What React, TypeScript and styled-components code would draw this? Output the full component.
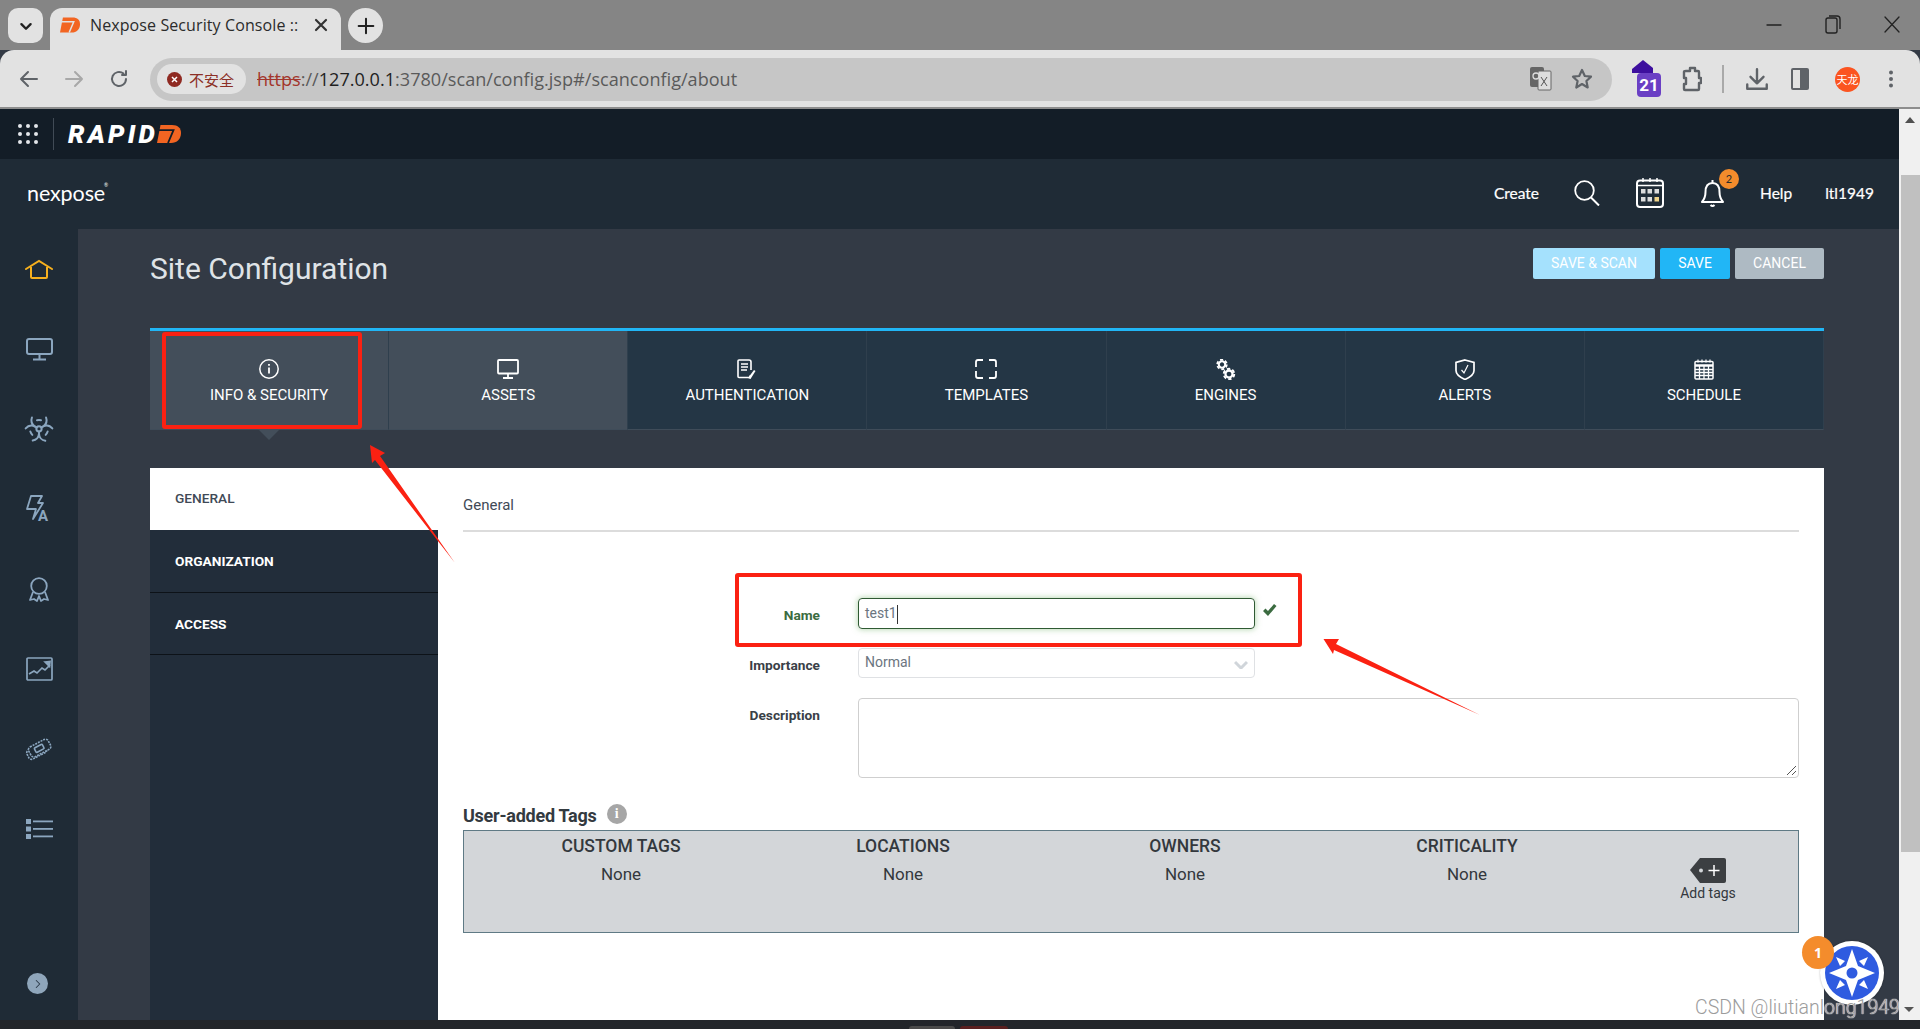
import React from "react";
import styled, { createGlobalStyle } from "styled-components";
import { Biohazard } from "lucide-react";

const Global = createGlobalStyle`
  html, body { margin: 0; padding: 0; background: #333a45; }
  * { box-sizing: border-box; }
`;

const Root = styled.div`
  position: relative;
  width: 1920px;
  height: 1029px;
  overflow: hidden;
  font-family: Roboto, "Liberation Sans", sans-serif;
  display: flex;
  flex-direction: column;
`;

/* ---------- browser chrome ---------- */
const TabStrip = styled.div`
  height: 50px;
  background: #858585;
  display: flex;
  align-items: flex-start;
  padding: 8px 14px 0 8px;
  color: #222;
`;
const TabSearch = styled.div`
  width: 35px;
  height: 35px;
  border-radius: 10px;
  background: #e2e2e2;
  display: flex;
  align-items: center;
  justify-content: center;
`;
const Tab = styled.div`
  position: relative;
  width: 291px;
  height: 42px;
  margin-left: 7px;
  background: #e2e2e2;
  border-radius: 12px 12px 0 0;
  display: flex;
  align-items: center;
  padding: 0 10px 8px 10px;
  font: 400 17.5px "Open Sans", "Noto Sans", sans-serif;
  letter-spacing: 0.1px;
  color: #2b2b2b;
  white-space: nowrap;
`;
const TabTitle = styled.span`
  margin-left: 10px;
  flex: 1;
  font-size: 16px;
`;
const NewTab = styled.div`
  width: 35px;
  height: 35px;
  margin-left: 7px;
  border-radius: 50%;
  background: #e2e2e2;
  display: flex;
  align-items: center;
  justify-content: center;
`;
const WindowControls = styled.div`
  margin-left: auto;
  display: flex;
  align-items: center;
  gap: 38px;
  height: 34px;
  padding-right: 2px;
`;
const Toolbar = styled.div`
  height: 57px;
  background: #e2e2e2;
  border-radius: 14px 14px 0 0;
  display: flex;
  align-items: center;
  padding: 1px 16px 0 17px;
  flex: none;
`;
const NavIcons = styled.div`
  display: flex;
  align-items: center;
  gap: 21px;
  width: 133px;
`;
const Omnibox = styled.div`
  width: 1462px;
  height: 43px;
  border-radius: 22px;
  background: #c6c6c6;
  display: flex;
  align-items: center;
  padding: 0 18px 0 7px;
`;
const SecurityChip = styled.div`
  width: 89px;
  height: 30px;
  border-radius: 15px;
  background: #e2e2e2;
  display: flex;
  align-items: center;
  gap: 7px;
  padding-left: 10px;
  color: #8c2f26;
  font: 400 15px "Noto Sans CJK SC", sans-serif;
  flex: none;
`;
const Url = styled.div`
  margin-left: 11px;
  font: 400 18.1px "Open Sans", "Noto Sans", sans-serif;
  color: #5a5a5a;
  white-space: nowrap;
  flex: 1;
`;
const UrlScheme = styled.span`
  color: #a3362c;
  text-decoration: line-through;
`;
const UrlHost = styled.span`
  color: #1f1f1f;
`;
const OmniIcons = styled.div`
  display: flex;
  align-items: center;
  gap: 18px;
`;
const ToolIcons = styled.div`
  display: flex;
  align-items: center;
  margin-left: 20px;
  gap: 20px;
`;
const Separator = styled.div`
  width: 2px;
  height: 28px;
  background: #a9a9a9;
`;
const Avatar = styled.div`
  width: 25px;
  height: 25px;
  margin-left: 5px;
  border-radius: 50%;
  background: #fb5420;
  color: #fff;
  font: 400 11px "Noto Sans CJK SC", sans-serif;
  display: flex;
  align-items: center;
  justify-content: center;
`;
const MenuDots = styled.svg`
  margin-left: 8px;
`;
const ChromeLine = styled.div`
  height: 2px;
  background: #8d8d8d;
  flex: none;
`;

/* ---------- page ---------- */
const PageRow = styled.div`
  flex: 1;
  min-height: 0;
  display: flex;
`;
const Page = styled.div`
  width: 1899px;
  display: flex;
  flex-direction: column;
`;
const Scrollbar = styled.div`
  width: 21px;
  background: #f0f0f0;
  display: flex;
  flex-direction: column;
  align-items: flex-end;
`;
const ScrollArrow = styled.div`
  width: 100%;
  height: 66px;
  padding-top: 8px;
  display: flex;
  justify-content: center;
  &::before {
    content: "";
    border: 5px solid transparent;
    border-top: 0;
    border-bottom: 6px solid #505050;
    height: 0;
  }
`;
const ScrollThumb = styled.div`
  width: 19px;
  height: 677px;
  background: #c0c0c0;
`;
const RapidBar = styled.div`
  height: 50px;
  background: #131d27;
  display: flex;
  align-items: center;
  padding-left: 18px;
  flex: none;
`;
const Dots = styled.div`
  display: grid;
  grid-template-columns: repeat(3, 4px);
  grid-auto-rows: 4px;
  gap: 4px 4px;
  width: 20px;
`;
const Dot = styled.span`
  border-radius: 50%;
  background: #e3e6ea;
`;
const RapidDivider = styled.div`
  width: 1px;
  height: 32px;
  background: #414b56;
  margin: 0 14px 0 15px;
`;
const RapidWord = styled.span`
  font: italic 900 26px Roboto, sans-serif;
  color: #fff;
  letter-spacing: 3.2px;
  margin-right: -1px;
`;
const NexposeBar = styled.div`
  height: 70px;
  background: #1f2b36;
  display: flex;
  align-items: center;
  padding: 0 25px 2px 27px;
  color: #fff;
  flex: none;
`;
const NexposeWord = styled.span`
  font: 400 21.5px Lato, sans-serif;
  letter-spacing: -0.1px;
  position: relative;
  &::after {
    content: "®";
    font-size: 5px;
    position: absolute;
    top: 2px;
    right: -3px;
  }
`;
const HeaderLinks = styled.div`
  margin-left: auto;
  display: flex;
  align-items: center;
  font: 400 15.5px Lato, sans-serif;
`;
const HeaderLink = styled.span<{ $ml: number }>`
  margin-left: ${(p) => p.$ml}px;
  -webkit-text-stroke: 0.2px #fff;
`;
const HeaderIcon = styled.span<{ $ml: number }>`
  position: relative;
  margin-left: ${(p) => p.$ml}px;
  display: flex;
`;
const BellBadge = styled.span`
  position: absolute;
  top: -11px;
  right: -15px;
  width: 20px;
  height: 20px;
  border-radius: 50%;
  background: #f48c2c;
  color: #2b2b2b;
  font: 400 11px Lato, sans-serif;
  display: flex;
  align-items: center;
  justify-content: center;
`;
const Body = styled.div`
  flex: 1;
  min-height: 0;
  display: flex;
`;
const Sidebar = styled.nav`
  width: 78px;
  background: #1f2b36;
  display: flex;
  flex-direction: column;
  flex: none;
  padding-bottom: 26px;
`;
const SideItem = styled.div`
  height: 80px;
  display: flex;
  align-items: center;
  justify-content: center;
  color: #8ba6bf;
  padding-right: 0;
`;
const Collapse = styled.div`
  margin-top: auto;
  margin-left: 27px;
  width: 21px;
  height: 21px;
  border-radius: 50%;
  background: #8fa6bb;
  display: flex;
  align-items: center;
  justify-content: center;
`;
const Content = styled.main`
  flex: 1;
  background: #333a45;
  padding: 0 75px 0 72px;
  display: flex;
  flex-direction: column;
  min-width: 0;
`;
const TitleRow = styled.div`
  height: 99px;
  padding-top: 19px;
  display: flex;
  justify-content: space-between;
  align-items: flex-start;
`;
const Title = styled.h1`
  margin: 3px 0 0;
  font: 400 30px Roboto, sans-serif;
  color: #dfe3e7;
`;
const Buttons = styled.div`
  display: flex;
  gap: 5px;
`;
const ActionButton = styled.button<{ $bg: string; $w: number }>`
  width: ${(p) => p.$w}px;
  height: 31px;
  border: 0;
  border-radius: 2px;
  background: ${(p) => p.$bg};
  color: #fff;
  font: 400 14px Roboto, sans-serif;
  padding: 0 0 2px;
`;
const Tabs = styled.div`
  height: 102px;
  display: grid;
  grid-template-columns: repeat(7, 1fr);
  border-top: 3px solid #21b6f6;
  flex: none;
`;
const TabCell = styled.div<{ $light?: boolean; $pointer?: boolean }>`
  position: relative;
  background: ${(p) => (p.$light ? "#434e5a" : "#243645")};
  border-right: 1px solid #2f3f4d;
  border-bottom: 1px solid #3f4c59;
  color: #fff;
  display: flex;
  flex-direction: column;
  align-items: center;
  padding-top: 28px;
  font: 400 15px Roboto, sans-serif;
  gap: 7px;
  &::after {
    content: ${(p) => (p.$pointer ? '""' : "none")};
    position: absolute;
    left: 108px;
    top: 100%;
    border: 11px solid transparent;
    border-bottom: 0;
    border-top: 11px solid #434e5a;
  }
`;
const TabIcon = styled.span`
  height: 20px;
  display: flex;
`;
const Panel = styled.div`
  margin-top: 38px;
  flex: 1;
  min-height: 0;
  background: #fff;
  display: flex;
`;
const SubNav = styled.div`
  width: 288px;
  background: #222d3a;
  flex: none;
`;
const SubItem = styled.div<{ $active?: boolean }>`
  height: ${(p) => (p.$active ? 62 : 62.5)}px;
  background: ${(p) => (p.$active ? "#fff" : "#222d3a")};
  color: ${(p) => (p.$active ? "#3f4a57" : "#fff")};
  font: ${(p) => (p.$active ? 500 : 700)} 13.7px/16px Roboto, sans-serif;
  padding: ${(p) => (p.$active ? "22px" : "23px")} 25px 0;
  border-bottom: ${(p) => (p.$active ? "0" : "1px solid #0d1218")};
`;
const Pane = styled.div`
  flex: 1;
  padding: 0 25px 0 25px;
  min-width: 0;
`;
const PaneHeader = styled.div`
  height: 64px;
  border-bottom: 2px solid #dcdcdc;
  padding-top: 28px;
  font: 400 15px Roboto, sans-serif;
  color: #3f4a57;
  margin-bottom: 66px;
`;
const FormRow = styled.div<{ $mb: number }>`
  display: flex;
  align-items: flex-start;
  margin-bottom: ${(p) => p.$mb}px;
`;
const Label = styled.div<{ $valid?: boolean }>`
  width: 357px;
  margin-right: 38px;
  padding-top: 9px;
  text-align: right;
  font: 700 13.7px/16px Roboto, sans-serif;
  color: ${(p) => (p.$valid ? "#3b6b40" : "#3a3f47")};
  flex: none;
`;
const NameField = styled.div`
  width: 397px;
  height: 31px;
  border: 1px solid #2f5a33;
  border-radius: 4px;
  box-shadow: 0 0 6px rgba(100, 170, 90, 0.55);
  font: 400 14px/29px Roboto, sans-serif;
  color: #6b7580;
  padding-left: 6px;
  display: flex;
`;
const Caret = styled.span`
  width: 1px;
  height: 19px;
  margin-top: 6px;
  background: #333;
`;
const CheckMark = styled.span`
  margin: 5px 0 0 7px;
  display: flex;
`;
const SelectField = styled.div`
  width: 397px;
  height: 30px;
  border: 1px solid #dfe1e4;
  border-radius: 4px;
  font: 400 14px/26px Roboto, sans-serif;
  color: #6b7580;
  padding: 0 4px 0 6px;
  display: flex;
  justify-content: space-between;
  align-items: flex-start;
`;
const Chevron = styled.span`
  margin-top: 11px;
  margin-right: 2px;
  display: flex;
`;
const TextArea = styled.div`
  position: relative;
  flex: 1;
  height: 80px;
  border: 1px solid #cfcfcf;
  border-radius: 4px;
`;
const Grip = styled.svg`
  position: absolute;
  right: 1px;
  bottom: 1px;
`;
const TagsHeading = styled.div`
  display: flex;
  align-items: center;
  gap: 10px;
  height: 26px;
  margin-top: 26px;
  padding-bottom: 4px;
  font: 700 18px Roboto, sans-serif;
  letter-spacing: -0.25px;
  color: #333a40;
`;
const InfoDot = styled.span`
  width: 20px;
  height: 20px;
  border-radius: 50%;
  background: #a6a6a6;
  color: #fff;
  font: 700 14px "Liberation Serif", serif;
  display: flex;
  align-items: center;
  justify-content: center;
  margin-top: -2px;
`;
const TagsBox = styled.div`
  height: 103px;
  background: #d3d6d9;
  border: 1px solid #5f7a85;
  display: flex;
  padding: 4px 0 0 16px;
`;
const TagColumn = styled.div`
  width: 282px;
  text-align: center;
  color: #33383d;
`;
const TagTitle = styled.div`
  font: 500 17.5px/20px Roboto, sans-serif;
  height: 29px;
  padding-top: 1px;
`;
const TagValue = styled.div`
  font: 400 17px/20px Roboto, sans-serif;
`;
const AddTags = styled.div`
  width: 168px;
  margin-left: 16px;
  display: flex;
  flex-direction: column;
  align-items: center;
  padding-top: 23px;
  font: 400 14px Roboto, sans-serif;
  color: #33383d;
  gap: 2px;
`;
const BottomStrip = styled.div`
  height: 9px;
  background: #22252a;
  display: flex;
  padding: 6px 0 0 909px;
  gap: 5px;
  flex: none;
`;
const TaskChip = styled.span<{ $bg: string; $w: number }>`
  width: ${(p) => p.$w}px;
  height: 3px;
  border-radius: 3px 3px 0 0;
  background: ${(p) => p.$bg};
`;

/* ---------- overlays ---------- */
const InfoHighlight = styled.div`
  position: absolute;
  left: 162px;
  top: 332px;
  width: 200px;
  height: 97px;
  border: 4px solid #fb2112;
  border-radius: 3px;
`;
const NameHighlight = styled.div`
  position: absolute;
  left: 735px;
  top: 573px;
  width: 567px;
  height: 74px;
  border: 4px solid #fb2112;
  border-radius: 3px;
`;
const ArrowLayer = styled.svg`
  position: absolute;
  left: 0;
  top: 0;
  pointer-events: none;
`;
const Helper = styled.div`
  position: absolute;
  left: 1820px;
  top: 941px;
  width: 64px;
  height: 64px;
  border-radius: 50%;
  background: #fff;
  display: flex;
  align-items: center;
  justify-content: center;
  box-shadow: 0 0 2px rgba(0, 0, 0, 0.3);
`;
const HelperBadge = styled.div`
  position: absolute;
  left: 1802px;
  top: 936px;
  width: 32px;
  height: 33px;
  border-radius: 50%;
  background: #f48c2c;
  color: #fff;
  font: 700 14px "Open Sans", sans-serif;
  display: flex;
  align-items: center;
  justify-content: center;
`;
const Watermark = styled.div`
  position: absolute;
  left: 1695px;
  top: 997px;
  font: 300 19.5px/22px Roboto, "Liberation Sans", sans-serif;
  color: #9c9c9c;
  text-shadow: 0 0 1px #fff, 0 0 1px #fff;
  white-space: nowrap;
`;
const WatermarkCaret = styled.div`
  position: absolute;
  left: 1904px;
  top: 1007px;
  border: 5px solid transparent;
  border-bottom: 0;
  border-top: 5px solid #555;
`;

/* ---------- icons ---------- */
type P = { s?: string };
const RapidMark = ({ w, h, bg }: { w: number; h: number; bg: string }) => (
  <svg width={w} height={h} viewBox="0 0 24 18">
    <path fill="#f26522" d="M3.500 0H15c6 0 9 3 9 8 0 6-4 10-10 10H0z" />
    <path fill="none" stroke={bg} strokeWidth="1.800" d="M2 5.200h14.500L11 18" />
  </svg>
);
const Line = ({ d, c = "#5f6368", w = 2, size = 24 }: { d: string; c?: string; w?: number; size?: number }) => (
  <svg width={size} height={size} viewBox="0 0 24 24" fill="none" stroke={c} strokeWidth={w} strokeLinecap="round" strokeLinejoin="round">
    <path d={d} />
  </svg>
);

const HomeIcon = () => (
  <svg width="28" height="21" viewBox="0 0 28 21" fill="none" stroke="#f6b01e" strokeWidth="2">
    <path d="M1 10 14 2l13 8" strokeLinecap="round" />
    <path d="M6 8v10q0 1 1 1h14q1 0 1-1V8" />
  </svg>
);
const MonitorIcon = ({ s = "#8ba6bf" }: P) => (
  <svg width="27" height="23" viewBox="0 0 27 23" fill="none" stroke={s} strokeWidth="2">
    <rect x="1" y="1" width="25" height="15" rx="2" />
    <path d="M13.5 16v5M7 21.5h13" />
  </svg>
);
const BoltIcon = () => (
  <svg width="30" height="34" viewBox="0 0 30 34" fill="none" stroke="#8ba6bf" strokeWidth="1.8">
    <path d="M7 4h11l-4 7h5L9 27l3-10H3z" strokeLinejoin="round" />
    <text x="14" y="29" fill="#8ba6bf" stroke="none" fontFamily="Roboto" fontWeight="700" fontSize="15">A</text>
  </svg>
);
const AwardIcon = () => (
  <svg width="20" height="25" viewBox="0 0 20 25" fill="none" stroke="#8ba6bf" strokeWidth="1.8">
    <circle cx="10" cy="9" r="7.800" />
    <path d="M4 15 1 23l4-1 3 2 2-5 2 5 3-2 4 1-3-8" strokeLinejoin="round" />
  </svg>
);
const ChartIcon = () => (
  <svg width="27" height="24" viewBox="0 0 27 24" fill="none" stroke="#8ba6bf" strokeWidth="1.7">
    <rect x="1" y="1" width="25" height="22" rx="1" />
    <path d="m3 17 5-3 3 2 5-5 3 2 5-5" />
    <path d="m19 5 5-.500-.500 5z" fill="#8ba6bf" />
  </svg>
);
const TicketIcon = () => (
  <svg width="28" height="24" viewBox="0 0 28 24" fill="none" stroke="#8ba6bf" strokeWidth="1.6">
    <g transform="rotate(-28 14 12)">
      <rect x="1" y="8" width="20" height="10" rx="3" strokeDasharray="2 1" />
      <rect x="4" y="6" width="22" height="11" rx="3" fill="#1f2b36" strokeDasharray="2 1" />
      <rect x="10" y="9" width="9" height="5" rx="1" />
    </g>
  </svg>
);
const ListIcon = () => (
  <svg width="27" height="20" viewBox="0 0 27 20" fill="#8ba6bf">
    <rect x="0" y="0" width="5" height="5" />
    <rect x="0" y="7.500" width="5" height="5" />
    <rect x="0" y="15" width="5" height="5" />
    <rect x="7" y="1.500" width="20" height="1.800" />
    <rect x="7" y="9" width="20" height="1.800" />
    <rect x="7" y="16.500" width="20" height="1.800" />
  </svg>
);
const TabInfo = () => (
  <svg width="22" height="20" viewBox="0 0 22 20" fill="none" stroke="#fff" strokeWidth="1.500">
    <circle cx="11" cy="10" r="9.200" />
    <path d="M11 8.500v6" strokeWidth="1.800" />
    <path d="M11 5v1.800" strokeWidth="1.800" />
  </svg>
);
const TabMonitor = () => (
  <svg width="22" height="20" viewBox="0 0 22 20" fill="none" stroke="#fff" strokeWidth="1.800">
    <rect x="1" y="1" width="20" height="13.500" rx="1" />
    <path d="M11 14.500v4M6 19h10" />
  </svg>
);
const TabDoc = () => (
  <svg width="20" height="20" viewBox="0 0 20 20" fill="none" stroke="#fff" strokeWidth="1.600">
    <path d="M13 16.500v2H2q-1 0-1-1V2q0-1 1-1h10q2 0 2 2v8" />
    <path d="M4 5h7M4 8h7M4 11h6" />
    <path d="m11 19 6-8 1.500 1-5 8z" fill="#fff" stroke="none" />
  </svg>
);
const TabCorners = () => (
  <svg width="22" height="20" viewBox="0 0 22 20" fill="none" stroke="#fff" strokeWidth="1.800">
    <path d="M8 1H3Q1 1 1 3v5M14 1h5q2 0 2 2v5M8 19H3q-2 0-2-2v-5M14 19h5q2 0 2-2v-5" />
  </svg>
);
const Gear = ({ x, y, r }: { x: number; y: number; r: number }) => (
  <g transform={`translate(${x} ${y})`} fill="none" stroke="#fff">
    <circle r={r} strokeWidth={r * 0.65} />
    <circle r={r * 1.5} strokeWidth={r * 0.55} strokeDasharray={`${r * 0.95} ${r * 0.62}`} />
  </g>
);
const TabGears = () => (
  <svg width="20" height="21" viewBox="0 0 20 21">
    <Gear x={6} y={5.500} r={3.200} />
    <Gear x={13} y={15} r={3.500} />
  </svg>
);
const TabShield = () => (
  <svg width="22" height="21" viewBox="0 0 22 21" fill="none" stroke="#fff" strokeWidth="1.700">
    <path d="M11 1 20 3.500v8q0 5-9 9-9-4-9-9v-8z" />
    <path d="m7.500 11 2.500 3 4-8" strokeWidth="1.200" />
  </svg>
);
const TabCalendar = () => (
  <svg width="20" height="21" viewBox="0 0 20 21" fill="none" stroke="#fff">
    <rect x="1" y="2.500" width="18" height="17.500" rx="1" strokeWidth="1.500" />
    <path d="M1 6.500h18" strokeWidth="2.500" />
    <path d="M4 0.500v3M8 0.500v3M12 0.500v3M16 0.500v3" strokeWidth="1.200" />
    <path d="M1 10.500h18M1 13.500h18M1 16.500h18M5.500 7v13M10 7v13M14.500 7v13" strokeWidth="1.300" />
  </svg>
);
const SearchIcon = () => (
  <svg width="26" height="26" viewBox="0 0 26 26" fill="none" stroke="#fff" strokeWidth="1.800">
    <circle cx="10.500" cy="10.500" r="9.300" />
    <path d="m17 17.500 8 8" strokeWidth="2" />
  </svg>
);
const CalendarIcon = () => (
  <svg width="28" height="30" viewBox="0 0 28 30" fill="none" stroke="#fff">
    <rect x="1" y="2.500" width="26" height="26.500" rx="3" strokeWidth="2" />
    <path d="M1 7.500h26M7 0v4M14 0v4M21 0v4" strokeWidth="1.500" />
    <g fill="#dcdcdc" stroke="none">
      <rect x="5" y="11" width="4.500" height="4.500" /><rect x="11.500" y="11" width="4.500" height="4.500" /><rect x="18.500" y="11" width="4.500" height="4.500" />
      <rect x="5" y="19" width="4.500" height="4.500" /><rect x="11.500" y="19" width="4.500" height="4.500" /><rect x="18.500" y="19" width="4.500" height="4.500" fill="#f0d48a" />
    </g>
  </svg>
);
const BellIcon = () => (
  <svg width="23" height="27" viewBox="0 0 23 27" fill="none" stroke="#fff" strokeWidth="2">
    <path d="M11.500 3C6 3 4.500 8 4.500 12c0 4-1 7-3.500 10h21c-2.500-3-3.500-6-3.500-10 0-4-1.500-9-7-9zM11.500 0v3" strokeLinejoin="round" />
    <path d="M9.500 25q2 2 4 0" />
  </svg>
);

const Compass = () => (
  <svg width="54" height="54" viewBox="0 0 54 54">
    <circle cx="27" cy="27" r="27" fill="#2f5be0" />
    <path fill="#fff" d="M27 3 33 20 50 27 33 34 27 51 21 34 4 27 21 20z" />
    <path fill="#fff" d="m11 11 9 4-5 5zM43 11l-4 9-5-5zM11 43l4-9 5 5zM43 43l-9-4 5-5z" />
    <circle cx="27" cy="27" r="5.500" fill="#2f5be0" />
  </svg>
);

const navItems = [
  <HomeIcon />,
  <MonitorIcon />,
  <Biohazard size={32} strokeWidth={1.5} />,
  <BoltIcon />,
  <AwardIcon />,
  <ChartIcon />,
  <TicketIcon />,
  <ListIcon />,
];
const tabs = [
  { label: "INFO & SECURITY", icon: <TabInfo />, light: true, pointer: true },
  { label: "ASSETS", icon: <TabMonitor />, light: true },
  { label: "AUTHENTICATION", icon: <TabDoc /> },
  { label: "TEMPLATES", icon: <TabCorners /> },
  { label: "ENGINES", icon: <TabGears /> },
  { label: "ALERTS", icon: <TabShield /> },
  { label: "SCHEDULE", icon: <TabCalendar /> },
];
const tagCols = ["CUSTOM TAGS", "LOCATIONS", "OWNERS", "CRITICALITY"];

export default function App() {
  return (
    <Root>
      <Global />
      <TabStrip>
        <TabSearch><Line d="m7 10 5 5 5-5" c="#222" w={2.600} size={22} /></TabSearch>
        <Tab>
          <RapidMark w={20} h={16} bg="#e2e2e2" />
          <TabTitle>Nexpose Security Console ::</TabTitle>
          <Line d="M6 6l12 12M18 6 6 18" c="#333" w={2.600} size={20} />
        </Tab>
        <NewTab><Line d="M12 4v16M4 12h16" c="#222" w={2.200} size={22} /></NewTab>
        <WindowControls>
          <Line d="M5 12h14" c="#222" w={1.300} />
          <svg width="18" height="22" viewBox="0 0 18 22" fill="none" stroke="#222" strokeWidth="1.400"><rect x="2" y="4" width="11" height="15" rx="2" /><path d="M5 2h8q3 0 3 3v10" /></svg>
          <Line d="M5 4l14 15M19 4 5 19" c="#222" w={1.300} />
        </WindowControls>
      </TabStrip>
      <Toolbar>
        <NavIcons>
          <Line d="M20 12H4m7-7-7 7 7 7" c="#5f6368" />
          <Line d="M4 12h16m-7-7 7 7-7 7" c="#a8a8a8" />
          <Line d="M19 12a7 7 0 1 1-2.500-5.400M19 4v4h-4" c="#5f6368" />
        </NavIcons>
        <Omnibox>
          <SecurityChip>
            <svg width="15" height="15" viewBox="0 0 15 15"><circle cx="7.500" cy="7.500" r="7.500" fill="#8f2a22" /><path d="m5 5 5 5m0-5-5 5" stroke="#fff" strokeWidth="1.500" /></svg>
            不安全
          </SecurityChip>
          <Url><UrlScheme>https</UrlScheme>://<UrlHost>127.0.0.1</UrlHost>:3780/scan/config.jsp#/scanconfig/about</Url>
          <OmniIcons>
            <svg width="22" height="24" viewBox="0 0 22 24"><rect x="0" y="0" width="14" height="20" rx="2" fill="#666" /><rect x="8" y="4" width="13" height="19" rx="1" fill="#ddd" stroke="#666" /><path d="m11 10 6 9M17 10l-6 9" stroke="#555" /><circle cx="6" cy="9" r="3" fill="none" stroke="#ddd" strokeWidth="1.300" /></svg>
            <Line d="m12 3 2.800 6 6.200.7-4.600 4.300 1.300 6.500L12 17l-5.700 3.500L7.600 14 3 9.700 9.200 9z" c="#5f6368" w={2.200} size={24} />
          </OmniIcons>
        </Omnibox>
        <ToolIcons>
          <svg width="30" height="38" viewBox="0 0 30 38">
            <path d="M11 0 21 8v5H0V9z" fill="#3d0f9e" />
            <rect x="5" y="13" width="24" height="24" rx="4" fill="#6a3fc4" />
            <text x="17" y="31" fill="#fff" fontFamily="Roboto" fontWeight="700" fontSize="17" textAnchor="middle">21</text>
          </svg>
          <svg width="20" height="28" viewBox="0 0 20 28" fill="none" stroke="#5f6368" strokeWidth="2.400"><path d="M4 6h4V3h5v3h3q1 0 1 1v6h2v5h-2v6q0 1-1 1H3q-1 0-1-1v-5h2v-6H2V7q0-1 2-1z" strokeLinejoin="round" /></svg>
          <Separator />
          <Line d="M12 3v13m-6-6 6 6 6-6M3 17v4h18v-4" c="#5f6368" w={2.200} size={26} />
          <svg width="20" height="26" viewBox="0 0 20 26"><rect x="1" y="2" width="18" height="22" rx="2" fill="#5f6368" /><rect x="3" y="4" width="7" height="18" fill="#e2e2e2" /></svg>
          <Avatar>天龙</Avatar>
          <MenuDots width="6" height="18" viewBox="0 0 6 18" fill="#5f6368"><circle cx="3" cy="2.500" r="2" /><circle cx="3" cy="9" r="2" /><circle cx="3" cy="15.500" r="2" /></MenuDots>
        </ToolIcons>
      </Toolbar>
      <ChromeLine />
      <PageRow>
        <Page>
          <RapidBar>
            <Dots>{Array.from({ length: 9 }).map((_, i) => <Dot key={i} />)}</Dots>
            <RapidDivider />
            <RapidWord>RAPID</RapidWord>
            <RapidMark w={24} h={18} bg="#131d27" />
          </RapidBar>
          <NexposeBar>
            <NexposeWord>nexpose</NexposeWord>
            <HeaderLinks>
              <HeaderLink $ml={0}>Create</HeaderLink>
              <HeaderIcon $ml={35}><SearchIcon /></HeaderIcon>
              <HeaderIcon $ml={36}><CalendarIcon /></HeaderIcon>
              <HeaderIcon $ml={37}><BellIcon /><BellBadge>2</BellBadge></HeaderIcon>
              <HeaderLink $ml={36}>Help</HeaderLink>
              <HeaderLink $ml={33}>ltl1949</HeaderLink>
            </HeaderLinks>
          </NexposeBar>
          <Body>
            <Sidebar>
              {navItems.map((n, i) => <SideItem key={i}>{n}</SideItem>)}
              <Collapse><Line d="m9 6 6 6-6 6" c="#2c3a48" w={1.800} size={14} /></Collapse>
            </Sidebar>
            <Content>
              <TitleRow>
                <Title>Site Configuration</Title>
                <Buttons>
                  <ActionButton $bg="#a5e1fd" $w={122}>SAVE &amp; SCAN</ActionButton>
                  <ActionButton $bg="#21b6f6" $w={70}>SAVE</ActionButton>
                  <ActionButton $bg="#aebac3" $w={89}>CANCEL</ActionButton>
                </Buttons>
              </TitleRow>
              <Tabs>
                {tabs.map((t) => (
                  <TabCell key={t.label} $light={t.light} $pointer={t.pointer}>
                    <TabIcon>{t.icon}</TabIcon>
                    {t.label}
                  </TabCell>
                ))}
              </Tabs>
              <Panel>
                <SubNav>
                  <SubItem $active>GENERAL</SubItem>
                  <SubItem>ORGANIZATION</SubItem>
                  <SubItem>ACCESS</SubItem>
                </SubNav>
                <Pane>
                  <PaneHeader>General</PaneHeader>
                  <FormRow $mb={19}>
                    <Label $valid>Name</Label>
                    <NameField>test1<Caret /></NameField>
                    <CheckMark>
                      <svg width="15" height="14" viewBox="0 0 15 14"><path d="m1 8 2.500-2.500L6 8l6-7 2.500 2L6 13z" fill="#3b6b40" /></svg>
                    </CheckMark>
                  </FormRow>
                  <FormRow $mb={20}>
                    <Label>Importance</Label>
                    <SelectField>
                      Normal
                      <Chevron><svg width="14" height="9" viewBox="0 0 14 9"><path d="m1 2 6 6 6-6" fill="none" stroke="#d0d5da" strokeWidth="3" /></svg></Chevron>
                    </SelectField>
                  </FormRow>
                  <FormRow $mb={0}>
                    <Label>Description</Label>
                    <TextArea>
                      <Grip width="11" height="11" viewBox="0 0 11 11"><path d="M10 1 1 10M10 6l-4 4" stroke="#555" /></Grip>
                    </TextArea>
                  </FormRow>
                  <TagsHeading>User-added Tags <InfoDot>i</InfoDot></TagsHeading>
                  <TagsBox>
                    {tagCols.map((c) => (
                      <TagColumn key={c}>
                        <TagTitle>{c}</TagTitle>
                        <TagValue>None</TagValue>
                      </TagColumn>
                    ))}
                    <AddTags>
                      <svg width="36" height="25" viewBox="0 0 36 25">
                        <path d="M10 0h24q2 0 2 2v21q0 2-2 2H10L0 12z" fill="#3c3f42" />
                        <circle cx="11" cy="12.500" r="2" fill="#d3d6d9" />
                        <path d="M24 7v11M18.500 12.500h11" stroke="#fff" strokeWidth="1.500" />
                      </svg>
                      Add tags
                    </AddTags>
                  </TagsBox>
                </Pane>
              </Panel>
            </Content>
          </Body>
        </Page>
        <Scrollbar>
          <ScrollArrow />
          <ScrollThumb />
        </Scrollbar>
      </PageRow>
      <BottomStrip>
        <TaskChip $bg="#4a4a4a" $w={46} />
        <TaskChip $bg="#5a1f1f" $w={48} />
      </BottomStrip>

      <InfoHighlight />
      <NameHighlight />
      <ArrowLayer width="1920" height="1029" viewBox="0 0 1920 1029">
        <path fill="#fb2112" d="M370 445 385 453 380 456 455 563 375 460 372 463z" />
        <path fill="#fb2112" d="M1323.500 639 1339 639 1336 644 1480 715 1334 650 1333 654z" />
      </ArrowLayer>
      <Helper><Compass /></Helper>
      <HelperBadge>1</HelperBadge>
      <Watermark>CSDN @liutianlong1949</Watermark>
      <WatermarkCaret />
    </Root>
  );
}
